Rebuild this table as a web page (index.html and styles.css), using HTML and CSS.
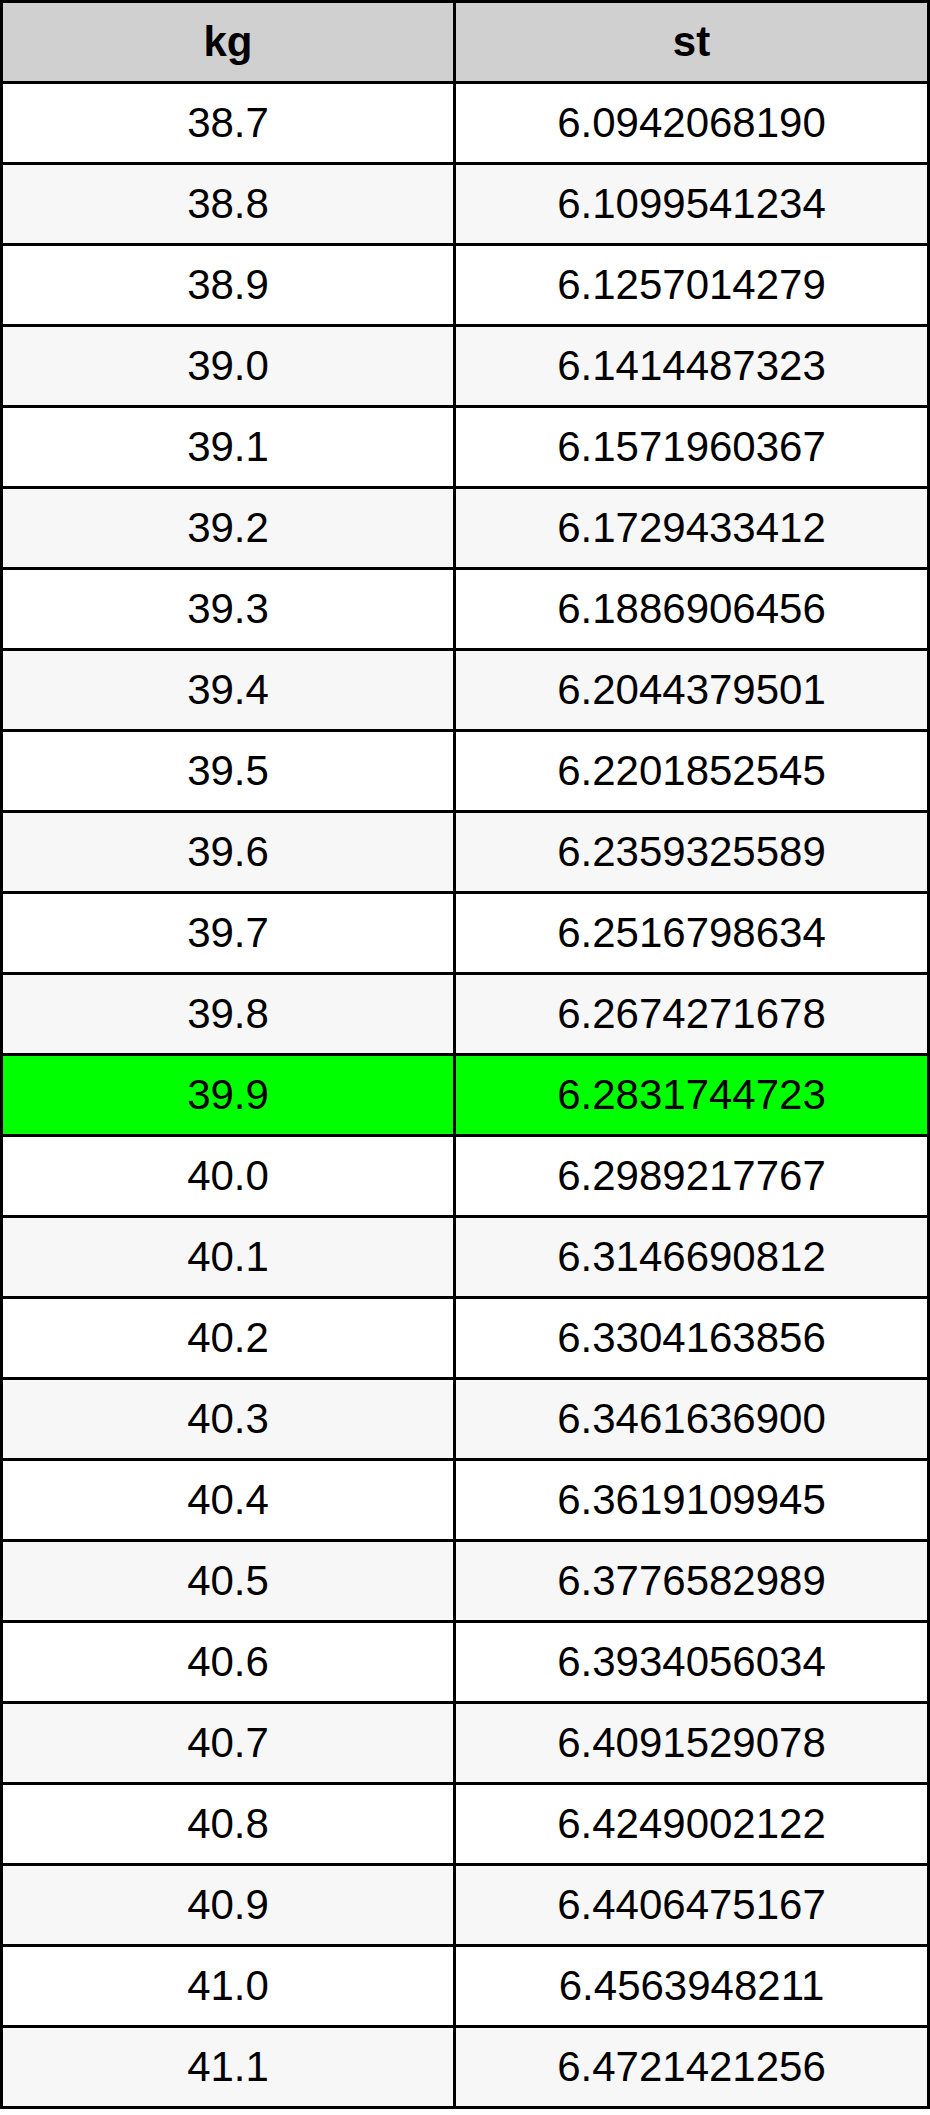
FILE: index.html
```html
<!DOCTYPE html>
<html>
<head>
<meta charset="utf-8">
<link rel="stylesheet" href="styles.css">
</head>
<body>
<table class="conv">
<colgroup><col class="c1"><col class="c2"></colgroup>
<thead><tr><th>kg</th><th>st</th></tr></thead>
<tbody>
<tr><td>38.7</td><td>6.0942068190</td></tr>
<tr class="alt"><td>38.8</td><td>6.1099541234</td></tr>
<tr><td>38.9</td><td>6.1257014279</td></tr>
<tr class="alt"><td>39.0</td><td>6.1414487323</td></tr>
<tr><td>39.1</td><td>6.1571960367</td></tr>
<tr class="alt"><td>39.2</td><td>6.1729433412</td></tr>
<tr><td>39.3</td><td>6.1886906456</td></tr>
<tr class="alt"><td>39.4</td><td>6.2044379501</td></tr>
<tr><td>39.5</td><td>6.2201852545</td></tr>
<tr class="alt"><td>39.6</td><td>6.2359325589</td></tr>
<tr><td>39.7</td><td>6.2516798634</td></tr>
<tr class="alt"><td>39.8</td><td>6.2674271678</td></tr>
<tr class="hl"><td>39.9</td><td>6.2831744723</td></tr>
<tr><td>40.0</td><td>6.2989217767</td></tr>
<tr class="alt"><td>40.1</td><td>6.3146690812</td></tr>
<tr><td>40.2</td><td>6.3304163856</td></tr>
<tr class="alt"><td>40.3</td><td>6.3461636900</td></tr>
<tr><td>40.4</td><td>6.3619109945</td></tr>
<tr class="alt"><td>40.5</td><td>6.3776582989</td></tr>
<tr><td>40.6</td><td>6.3934056034</td></tr>
<tr class="alt"><td>40.7</td><td>6.4091529078</td></tr>
<tr><td>40.8</td><td>6.4249002122</td></tr>
<tr class="alt"><td>40.9</td><td>6.4406475167</td></tr>
<tr><td>41.0</td><td>6.4563948211</td></tr>
<tr class="alt"><td>41.1</td><td>6.4721421256</td></tr>
</tbody>
</table>
</body>
</html>
```
FILE: styles.css
```css
html, body {
  margin: 0;
  padding: 0;
  background: #ffffff;
}
.conv {
  width: 930px;
  table-layout: fixed;
  border-collapse: collapse;
  font-family: "Liberation Sans", Arial, sans-serif;
  font-size: 42px;
  color: #000000;
}
.conv .c1 { width: 453px; }
.conv .c2 { width: 474px; }
.conv th,
.conv td {
  border: 3px solid #000000;
  height: 78px;
  padding: 0;
  text-align: center;
  vertical-align: middle;
}
.conv th {
  background: #d0d0d0;
  font-weight: bold;
}
.conv tr.alt td {
  background: #f7f7f7;
}
.conv tr.hl td {
  background: #00ff00;
}
```
